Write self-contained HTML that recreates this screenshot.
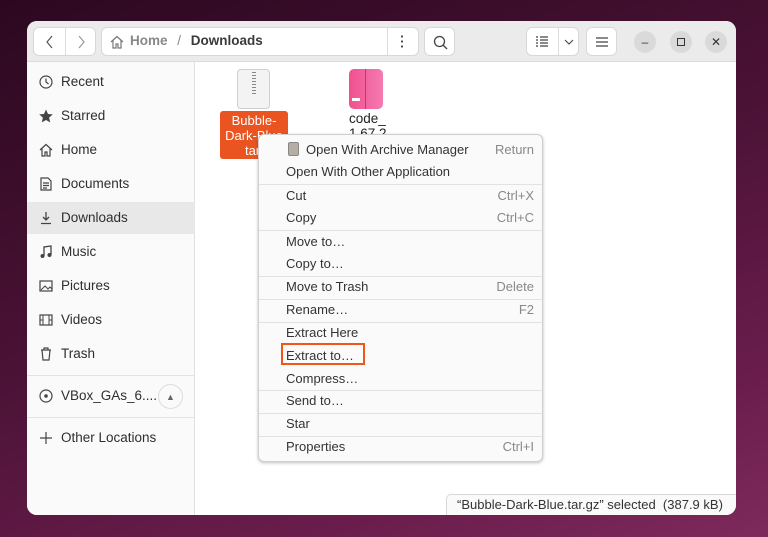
<!DOCTYPE html>
<html><head><meta charset="utf-8"><style>
*{margin:0;padding:0;box-sizing:border-box}
body{width:768px;height:537px;overflow:hidden;font-family:"Liberation Sans","DejaVu Sans",sans-serif;background:linear-gradient(160deg,#2c0820 0%,#4a1235 45%,#6a1d4c 80%,#7d2a5c 100%);position:relative;color:#303030}
.win{position:absolute;left:27px;top:21px;width:709px;height:494px;background:#fff;border-radius:10px;overflow:hidden}
.hdr{position:absolute;left:0;top:0;width:709px;height:41px;background:#ebebeb;border-bottom:1px solid #dcdcdc}
.btn{position:absolute;top:6px;height:29px;background:#fff;border:1px solid #d8d8d8;border-radius:6px}
.side{position:absolute;left:0;top:41px;width:168px;height:453px;background:#fafafa;border-right:1px solid #e0e0e0}
.si{position:absolute;left:0;width:168px;height:32px;font-size:13.5px;line-height:32px;padding-left:34px;color:#2e2e2e}
.si svg{position:absolute;left:12px;top:9px}
.menu{position:absolute;left:258px;top:134px;width:285px;height:328px;background:#fafafa;border:1px solid #cfcfcf;border-radius:6px;box-shadow:0 1px 3px rgba(0,0,0,.25)}
.mi{position:absolute;left:27px;right:8px;font-size:13px;color:#333;height:20px;line-height:20px}
.mi span{position:absolute;right:0;color:#888}
.sep{position:absolute;left:0;right:0;height:1px;background:#e2e2e2}
.circ{position:absolute;top:10px;width:22px;height:22px;border-radius:11px;background:#dadada;text-align:center;font-size:12px;line-height:22px;color:#333}
</style></head><body>
<div class="win">
 <div class="hdr">
  <div class="btn" style="left:6px;width:63px"><div style="position:absolute;left:31px;top:0;width:1px;height:27px;background:#ddd"></div>
   <svg style="position:absolute;left:10px;top:7px" width="12" height="14"><path d="M8 1L3 7l5 6" stroke="#555" fill="none" stroke-width="1.2"/></svg>
   <svg style="position:absolute;left:41px;top:7px" width="12" height="14"><path d="M4 1l5 6-5 6" stroke="#999" fill="none" stroke-width="1.2"/></svg></div>
  <div class="btn" style="left:74px;width:318px">
   <svg style="position:absolute;left:8px;top:7px" width="14" height="14"><path d="M1 7L7 1.5 13 7M3 5.5V13h3V9h2v4h3V5.5" stroke="#777" fill="none" stroke-width="1.2"/></svg>
   <div style="position:absolute;left:28px;top:5px;font-size:13.5px;font-weight:bold;color:#888">Home <span style="font-weight:normal;margin:0 6px">/</span> <span style="color:#3a3a3a">Downloads</span></div>
   <div style="position:absolute;left:285px;top:0;width:1px;height:27px;background:#ddd"></div>
   <div style="position:absolute;left:299px;top:6px;width:2px;height:14px;background:radial-gradient(circle,#444 1px,transparent 1.2px) 0 0/2px 5px"></div>
  </div>
  <div class="btn" style="left:397px;width:31px"><svg style="position:absolute;left:8px;top:7px" width="15" height="15"><circle cx="6.5" cy="6.5" r="5" stroke="#444" fill="none" stroke-width="1.3"/><path d="M10 10l4 4" stroke="#444" stroke-width="1.3"/></svg></div>
  <div class="btn" style="left:499px;width:53px"><div style="position:absolute;left:31px;top:0;width:1px;height:27px;background:#ddd"></div>
   <svg style="position:absolute;left:9px;top:8px" width="12" height="11"><path d="M0 1h2M4 1h8M0 4h2M4 4h8M0 7h2M4 7h8M0 10h2M4 10h8" stroke="#444" stroke-width="1.2"/></svg>
   <svg style="position:absolute;left:37px;top:11px" width="10" height="6"><path d="M1 1l4 4 4-4" stroke="#444" fill="none" stroke-width="1.1"/></svg></div>
  <div class="btn" style="left:559px;width:31px"><svg style="position:absolute;left:9px;top:9px" width="12" height="10"><path d="M0 1h12M0 5h12M0 9h12" stroke="#444" stroke-width="1.2"/></svg></div>
  <div class="circ" style="left:607px">–</div>
  <div class="circ" style="left:643px"><div style="position:absolute;left:7px;top:7px;width:8px;height:8px;border:1.2px solid #333"></div></div>
  <div class="circ" style="left:678px">✕</div>
 </div>
 <div class="side">
  <div class="si" style="top:4px"><svg width="14" height="14"><circle cx="7" cy="7" r="6" stroke="#444" fill="none" stroke-width="1.2"/><path d="M7 3.5V7l2.5 2" stroke="#444" fill="none" stroke-width="1.2"/></svg>Recent</div>
  <div class="si" style="top:38px"><svg width="14" height="14"><path d="M7 .5l2 4.5 4.8.4-3.7 3.2 1.1 4.8L7 11 2.8 13.4l1.1-4.8L.2 5.4 5 5z" fill="#444"/></svg>Starred</div>
  <div class="si" style="top:72px"><svg width="14" height="14"><path d="M1 7L7 1.5 13 7M3 5.5V13h3V9h2v4h3V5.5" stroke="#444" fill="none" stroke-width="1.2"/></svg>Home</div>
  <div class="si" style="top:106px"><svg width="14" height="14"><path d="M2 1h7l3 3v9H2zM4 6h6M4 8.5h6M4 11h4" stroke="#444" fill="none" stroke-width="1.2"/></svg>Documents</div>
  <div class="si" style="top:140px;background:#e8e8e8"><svg width="14" height="14"><path d="M7 1v8M4 6l3 3 3-3M2 12.5h10" stroke="#444" fill="none" stroke-width="1.3"/></svg>Downloads</div>
  <div class="si" style="top:174px"><svg width="14" height="14"><path d="M5 11V2l7-1v9" stroke="#444" fill="none" stroke-width="1.3"/><circle cx="3.5" cy="11" r="2" fill="#444"/><circle cx="10.5" cy="10" r="2" fill="#444"/></svg>Music</div>
  <div class="si" style="top:208px"><svg width="14" height="14"><rect x="1" y="2" width="12" height="10" stroke="#444" fill="none" stroke-width="1.2"/><path d="M2 11l4-4 3 3 2-2 2 2" stroke="#444" fill="none"/></svg>Pictures</div>
  <div class="si" style="top:242px"><svg width="14" height="14"><rect x="1" y="2" width="12" height="10" stroke="#444" fill="none" stroke-width="1.2"/><path d="M4 2v10M10 2v10M1 7h3M10 7h3" stroke="#444"/></svg>Videos</div>
  <div class="si" style="top:276px"><svg width="14" height="14"><path d="M2 3h10M5 3V1h4v2M3 3l1 10h6l1-10" stroke="#444" fill="none" stroke-width="1.2"/></svg>Trash</div>
  <div style="position:absolute;left:0;top:313px;width:168px;height:1px;background:#e3e3e3"></div>
  <div class="si" style="top:318px"><svg width="14" height="14"><circle cx="7" cy="7" r="6" stroke="#444" fill="none" stroke-width="1.2"/><circle cx="7" cy="7" r="1.8" fill="#444"/></svg>VBox_GAs_6....</div>
  <div style="position:absolute;left:131px;top:322px;width:25px;height:25px;border-radius:13px;border:1px solid #ddd;font-size:9px;text-align:center;line-height:24px;color:#666">▲</div>
  <div style="position:absolute;left:0;top:355px;width:168px;height:1px;background:#e3e3e3"></div>
  <div class="si" style="top:360px"><svg width="14" height="14"><path d="M7 1v12M1 7h12" stroke="#444" stroke-width="1.2"/></svg>Other Locations</div>
 </div>
 <div style="position:absolute;left:210px;top:48px;width:33px;height:40px;background:#f3f3f3;border:1px solid #cfcfcf;border-radius:4px"><div style="position:absolute;left:14px;top:2px;width:4px;height:22px;background:repeating-linear-gradient(#888 0 1px,transparent 1px 3px)"></div></div>
 <div style="position:absolute;left:193px;top:90px;width:68px;height:48px;background:#e95420;border-radius:3px;color:#fff;font-size:13px;text-align:center;line-height:15px;padding-top:2px">Bubble-<br>Dark-Blue<br>tar.</div>
 <div style="position:absolute;left:322px;top:48px;width:34px;height:40px;background:linear-gradient(90deg,#f0508f,#f47ab0);border-radius:5px"><div style="position:absolute;left:16px;top:0;width:1px;height:40px;background:#d0306e"></div><div style="position:absolute;left:3px;top:29px;width:8px;height:3px;background:#fff"></div></div>
 <div style="position:absolute;left:322px;top:90px;font-size:13.5px;color:#222;line-height:15px">code_<br>1.67.2</div>
 <div style="position:absolute;left:419px;top:473px;width:290px;height:21px;background:#fafafa;border:1px solid #d8d8d8;border-bottom:0;border-right:0;border-top-left-radius:5px;font-size:13px;line-height:20px;padding-left:10px;color:#333">“Bubble-Dark-Blue.tar.gz” selected&nbsp; (387.9 kB)</div>
</div>
<div class="menu">
 <div style="position:absolute;left:29px;top:7px;width:11px;height:14px;background:#b5aea4;border:1px solid #888;border-radius:2px"></div>
 <div class="mi" style="top:5px;left:47px">Open With Archive Manager<span>Return</span></div>
 <div class="mi" style="top:27px">Open With Other Application</div>
 <div class="sep" style="top:49px"></div>
 <div class="mi" style="top:51px">Cut<span>Ctrl+X</span></div>
 <div class="mi" style="top:73px">Copy<span>Ctrl+C</span></div>
 <div class="sep" style="top:95px"></div>
 <div class="mi" style="top:97px">Move to…</div>
 <div class="mi" style="top:119px">Copy to…</div>
 <div class="sep" style="top:141px"></div>
 <div class="mi" style="top:142px">Move to Trash<span>Delete</span></div>
 <div class="sep" style="top:164px"></div>
 <div class="mi" style="top:165px">Rename…<span>F2</span></div>
 <div class="sep" style="top:187px"></div>
 <div class="mi" style="top:188px">Extract Here</div>
 <div class="mi" style="top:211px">Extract to…</div>
 <div style="position:absolute;left:22px;top:208px;width:84px;height:22px;border:2px solid #f0561a"></div>
 <div class="mi" style="top:234px">Compress…</div>
 <div class="sep" style="top:255px"></div>
 <div class="mi" style="top:256px">Send to…</div>
 <div class="sep" style="top:278px"></div>
 <div class="mi" style="top:279px">Star</div>
 <div class="sep" style="top:301px"></div>
 <div class="mi" style="top:302px">Properties<span>Ctrl+I</span></div>
</div>
</body></html>
